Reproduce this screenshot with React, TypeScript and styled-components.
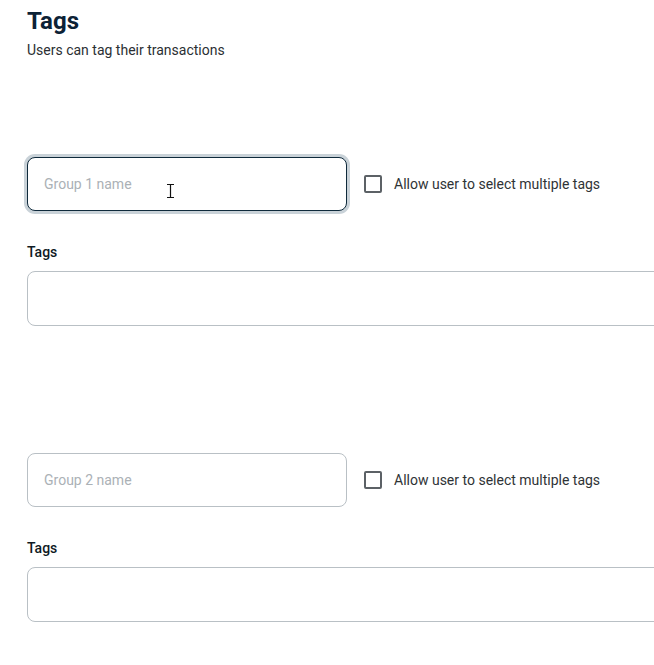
import React from 'react';
import styled, { createGlobalStyle } from 'styled-components';

const GlobalStyle = createGlobalStyle`
  html, body {
    margin: 0;
    padding: 0;
    background: #fff;
    overflow: hidden;
  }
  body {
    font-family: Roboto, "Liberation Sans", Arial, sans-serif;
  }
`;

const Page = styled.div`
  padding: 7px 0 0 27px;
  width: 627px;
  overflow: hidden;
`;

const Title = styled.h1`
  margin: 0;
  font-size: 24px;
  line-height: 28px;
  font-weight: 700;
  color: #0c2236;
`;

const Subtitle = styled.p`
  margin: 5px 0 0;
  font-size: 14px;
  line-height: 20px;
  color: #2b2f33;
`;

const Group = styled.section<{ $top: number }>`
  margin-top: ${(p) => p.$top}px;
`;

const Row = styled.div`
  display: flex;
  align-items: center;
  gap: 17px;
`;

const InputWrap = styled.div`
  position: relative;
  padding: 3px;
  margin: -3px;
`;

const NameInput = styled.input<{ $focused?: boolean }>`
  display: block;
  box-sizing: border-box;
  width: 320px;
  height: 54px;
  padding: 0 16px;
  border-radius: 8px;
  border: 1px solid ${(p) => (p.$focused ? '#0f2a3c' : '#b9c0c5')};
  box-shadow: ${(p) => (p.$focused ? '0 0 0 3px #c9d2d8' : 'none')};
  font-family: inherit;
  font-size: 14px;
  color: #222;
  outline: none;
  background: #fff;

  &::placeholder {
    color: #abb1b6;
  }
`;

const Cursor = styled.svg`
  position: absolute;
  left: 142px;
  top: 29px;
  pointer-events: none;
`;

const CheckLabel = styled.label`
  display: flex;
  align-items: center;
  gap: 12px;
  font-size: 14px;
  color: #2f3336;
  cursor: pointer;
`;

const Box = styled.span`
  box-sizing: border-box;
  width: 18px;
  height: 18px;
  border: 2px solid #5c6166;
  border-radius: 2px;
`;

const FieldLabel = styled.div`
  margin-top: 32px;
  font-size: 14px;
  line-height: 18px;
  font-weight: 500;
  color: #0f1a24;
`;

const TagsBox = styled.div`
  box-sizing: border-box;
  margin-top: 10px;
  width: 660px;
  height: 55px;
  border: 1px solid #b9c0c5;
  border-radius: 8px;
`;

const groups = [
  { name: 'Group 1 name', top: 97, focused: true },
  { name: 'Group 2 name', top: 127, focused: false },
];

export default function App() {
  return (
    <>
      <GlobalStyle />
      <Page>
        <Title>Tags</Title>
        <Subtitle>Users can tag their transactions</Subtitle>
        {groups.map((g) => (
          <Group key={g.name} $top={g.top}>
            <Row>
              <InputWrap>
                <NameInput placeholder={g.name} $focused={g.focused} />
                {g.focused && (
                  <Cursor width="9" height="16" viewBox="0 0 9 16">
                    <path
                      d="M1 1.5h2.5M5.5 1.5H8M4.5 2v12M1 14.5h2.5M5.5 14.5H8M3.5 1.5h2M3.5 14.5h2"
                      stroke="#111"
                      strokeWidth="1.2"
                      fill="none"
                    />
                  </Cursor>
                )}
              </InputWrap>
              <CheckLabel>
                <Box />
                Allow user to select multiple tags
              </CheckLabel>
            </Row>
            <FieldLabel>Tags</FieldLabel>
            <TagsBox />
          </Group>
        ))}
      </Page>
    </>
  );
}
